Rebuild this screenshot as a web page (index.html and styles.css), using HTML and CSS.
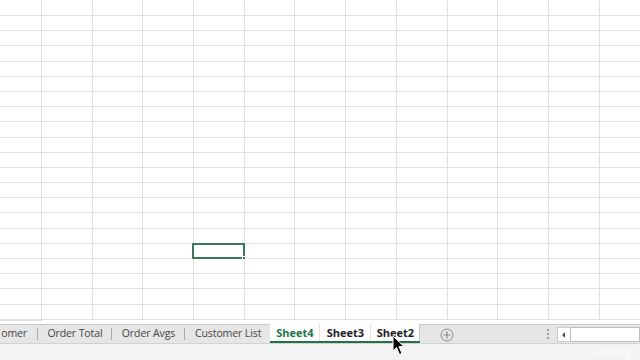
FILE: index.html
```
<!DOCTYPE html>
<html lang="en">
  <head>
    <meta charset="UTF-8" />
    <title>Book1 - Excel</title>
    <link rel="stylesheet" href="styles.css">
  </head>
  <body>
    <div class="sheet">
      <div id="grid" class="grid"></div>
    </div>

    <div class="tabbar">
      <div class="tabs">
        <span class="tab first">omer</span>
        <span class="tab w74">Order Total</span>
        <span class="tab w73">Order Avgs</span>
        <span class="tab w85">Customer List</span>
        <span class="tab picked active">Sheet4</span>
        <span class="tab picked w51">Sheet3</span>
        <span class="tab picked w49">Sheet2</span>
      </div>
      <div class="add">
        <svg width="14" height="14" viewBox="0 0 14 14">
          <circle cx="7" cy="7" r="6" fill="none" stroke="#8a8a8a" stroke-width="1"/>
          <path d="M7 3.5v7M3.5 7h7" stroke="#8a8a8a" stroke-width="1.2"/>
        </svg>
      </div>
      <div class="splitter"><i></i><i></i><i></i></div>
      <div class="hscroll">
        <div class="arrow"></div>
        <div class="track"></div>
      </div>
    </div>

    <div class="status">
      <span class="mark">udemy</span>
    </div>

    <svg class="cursor" width="14" height="22" viewBox="0 0 14 22">
      <path d="M1 1 L1 16 L4.5 12.5 L7.5 19.5 L10 18.4 L7 11.6 L12 11.6 Z" fill="#000" stroke="#fff" stroke-width="1"/>
    </svg>

    <script>
      let grid = document.querySelector("#grid");
      const cols = 13;
      const rows = 21;

      for (let r = 1; r <= rows; r++) {
        for (let c = 1; c <= cols; c++) {
          let cell = document.createElement("div");
          cell.className = "cell";
          grid.appendChild(cell);
        }
      }

      // the active cell sits on top of the grid lines
      let sel = document.createElement("div");
      sel.className = "selected";
      grid.appendChild(sel);
    </script>
  </body>
</html>
```
FILE: styles.css
```
html, body {
  margin: 0;
  padding: 0;
}

body {
  width: 640px;
  height: 360px;
  overflow: hidden;
  display: flex;
  flex-direction: column;
  background-color: #ffffff;
  font-family: "Open Sans", "Noto Sans", sans-serif;
  position: relative;
}

.sheet {
  height: 325px;
  overflow: hidden;
}

.grid {
  display: grid;
  grid-template-columns: 42px repeat(12, 50.7px);
  grid-template-rows: 16px repeat(20, 15.2px);
  position: relative;
}

.cell {
  box-sizing: border-box;
  border-right: 1px solid #e0e0e0;
  border-bottom: 1px solid #e0e0e0;
}

.selected {
  grid-column: 5;
  grid-row: 17;
  margin: -1px 0 0 -2px;
  border: 2px solid #3a7a59;
  position: relative;
  z-index: 1;
}

.selected::after {
  content: "";
  position: absolute;
  right: -3px;
  bottom: -3px;
  width: 4px;
  height: 4px;
  background-color: #2b6e4b;
  border: 1px solid #ffffff;
  box-sizing: border-box;
}

.tabbar {
  height: 18px;
  display: flex;
  align-items: stretch;
  background-color: #e6e6e6;
  border-top: 1px solid #c9c9c9;
  border-bottom: 1px solid #d2d2d2;
  margin-top: -1px;
}

.tabs {
  display: flex;
  align-items: stretch;
}

.tab {
  box-sizing: border-box;
  font-size: 10.5px;
  letter-spacing: -0.1px;
  color: #444444;
  line-height: 17px;
  position: relative;
  white-space: nowrap;
  display: flex;
  justify-content: center;
}

.tab::after {
  content: "";
  position: absolute;
  right: 0;
  top: 3px;
  height: 12px;
  border-right: 1px solid #a8a8a8;
}

.tab.first {
  width: 38px;
  justify-content: flex-end;
  padding-right: 11px;
}

.w74 { width: 74px; }
.w73 { width: 73px; }
.w51 { width: 51px; }
.w49 { width: 49px; }

.w85 {
  width: 85px;
  justify-content: flex-start;
  padding-left: 10px;
}

.w85::after {
  display: none;
}

.tab.picked {
  background-color: #ffffff;
  color: #1e1e1e;
  font-size: 11px;
  letter-spacing: 0;
  font-weight: 700;
  border-bottom: 2px solid #217346;
  margin-top: -1px;
  line-height: 18px;
}

.tab.picked::after {
  top: 0;
  height: 100%;
  border-right-color: #e2e2e2;
}

.tab.active {
  color: #217346;
  width: 50px;
}

.tab.picked:last-child::after {
  border-right-color: #c8c8c8;
}

.add {
  display: flex;
  align-items: center;
  margin-left: 20px;
  padding-top: 1px;
}

.splitter {
  display: flex;
  flex-direction: column;
  justify-content: center;
  gap: 2px;
  margin-left: 93px;
}

.splitter i {
  width: 2px;
  height: 2px;
  background-color: #9c9c9c;
}

.hscroll {
  display: flex;
  align-items: center;
  margin-left: 8px;
  flex: 1;
}

.arrow {
  width: 12px;
  height: 13px;
  background-color: #ffffff;
  border: 1px solid #cfcfcf;
  border-right: none;
  position: relative;
}

.arrow::before {
  content: "";
  position: absolute;
  left: 4px;
  top: 4px;
  border-top: 3px solid transparent;
  border-bottom: 3px solid transparent;
  border-right: 3px solid #555555;
}

.track {
  flex: 1;
  height: 13px;
  background-color: #ffffff;
  border: 1px solid #bdbdbd;
}

.status {
  flex: 1;
  background-color: #f3f3f3;
  display: flex;
  justify-content: flex-end;
  align-items: center;
  padding-right: 8px;
}

.mark {
  font-family: "Liberation Sans", sans-serif;
  font-size: 13px;
  color: #ffffff;
  opacity: 0.8;
}

.cursor {
  position: absolute;
  left: 392px;
  top: 335px;
}
```
